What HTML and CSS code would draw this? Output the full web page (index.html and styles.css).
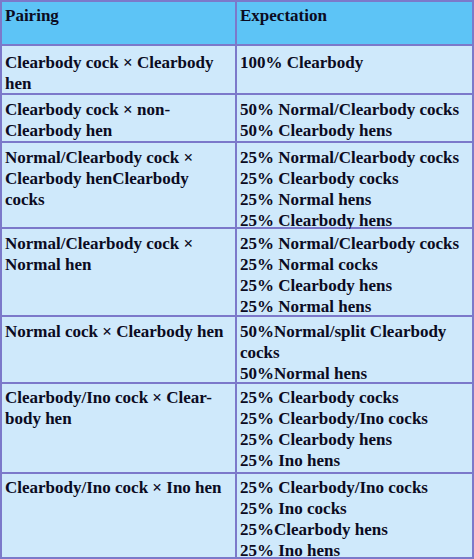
FILE: index.html
```html
<!DOCTYPE html>
<html>
<head>
<meta charset="utf-8">
<link rel="stylesheet" href="styles.css">
</head>
<body>
<div class="grid">
  <div class="cell head">Pairing</div><div class="cell head">Expectation</div>
  <div class="cell r1">Clearbody cock × Clearbody<br>hen</div><div class="cell r1">100% Clearbody</div>
  <div class="cell">Clearbody cock × non-<br>Clearbody hen</div><div class="cell">50% Normal/Clearbody cocks<br>50% Clearbody hens</div>
  <div class="cell">Normal/Clearbody cock ×<br>Clearbody henClearbody<br>cocks</div><div class="cell">25% Normal/Clearbody cocks<br>25% Clearbody cocks<br>25% Normal hens<br>25% Clearbody hens</div>
  <div class="cell">Normal/Clearbody cock ×<br>Normal hen</div><div class="cell">25% Normal/Clearbody cocks<br>25% Normal cocks<br>25% Clearbody hens<br>25% Normal hens</div>
  <div class="cell r5">Normal cock × Clearbody hen</div><div class="cell r5">50%Normal/split Clearbody<br>cocks<br>50%Normal hens</div>
  <div class="cell r6">Clearbody/Ino cock × Clear-<br>body hen</div><div class="cell r6">25% Clearbody cocks<br>25% Clearbody/Ino cocks<br>25% Clearbody hens<br>25% Ino hens</div>
  <div class="cell r7">Clearbody/Ino cock × Ino hen</div><div class="cell r7">25% Clearbody/Ino cocks<br>25% Ino cocks<br>25%Clearbody hens<br>25% Ino hens</div>
</div>
</body>
</html>
```
FILE: styles.css
```css
html, body {
  margin: 0;
  padding: 0;
  background: #cfe9fb;
}
.grid {
  width: 474px;
  height: 559px;
  box-sizing: border-box;
  display: grid;
  grid-template-columns: 235px 237px;
  grid-template-rows: 44px 49px 48px 86px 88px 67px 90px 85px;
  border-left: 2px solid #7c79ca;
  border-top: 2px solid #7c79ca;
  font-family: "Liberation Serif", "Times New Roman", serif;
  font-weight: bold;
  font-size: 17px;
  line-height: 21px;
  color: #0b0b22;
  overflow: hidden;
}
.cell {
  box-sizing: border-box;
  border-right: 2px solid #7c79ca;
  border-bottom: 2px solid #7c79ca;
  background: #cfe9fb;
  padding: 4px 0 0 3px;
  white-space: nowrap;
  min-height: 0;
}
.head {
  background: #5dc4f6;
  padding-top: 3px;
}
.r1 { padding-top: 6px; }
.r5 { padding-top: 4px; }
.r6 { padding-top: 3px; }
.r7 { padding-top: 3px; }
```
